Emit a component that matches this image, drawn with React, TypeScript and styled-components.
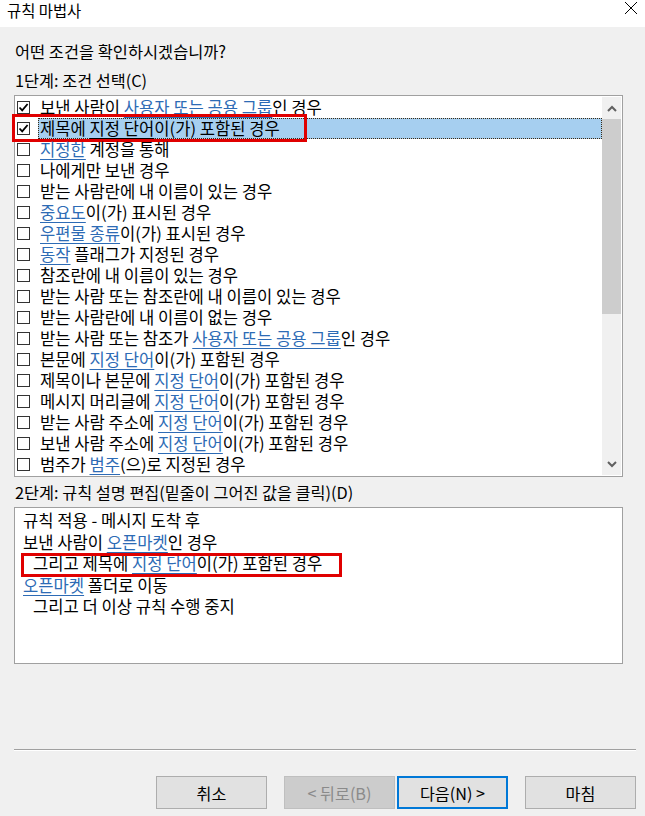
import React from "react";
import styled, { createGlobalStyle } from "styled-components";

const GlobalStyle = createGlobalStyle`
  html, body { margin: 0; padding: 0; background: #f0f0f0; }
  body {
    font-family: "Noto Sans CJK KR", "Noto Sans", "Liberation Sans", sans-serif;
    font-size: 16.3px;
    color: #000;
  }
  * { box-sizing: border-box; }
`;

const Window = styled.div`
  width: 645px;
  height: 816px;
  display: flex;
  flex-direction: column;
  background: #f0f0f0;
  overflow: hidden;
`;

const TitleBar = styled.div`
  height: 27px;
  background: #fff;
  display: flex;
  align-items: flex-start;
  justify-content: space-between;
  padding: 0 7px 0 7px;
`;

const TitleText = styled.div`
  font-size: 15.4px;
  line-height: 20px;
`;

const CloseBtn = styled.div`
  width: 14px;
  height: 14px;
  margin-top: 1px;
  display: flex;
`;

const Body = styled.div`
  flex: 1;
  display: flex;
  flex-direction: column;
  padding: 14px 9px 7px 14px;
`;

const Label = styled.div<{ $mt?: number; $size?: number }>`
  line-height: 21px;
  height: 21px;
  padding-left: 1px;
  white-space: nowrap;
  font-size: ${(p) => p.$size ?? 16.3}px;
  margin-top: ${(p) => p.$mt ?? 0}px;
`;

const ListBox = styled.div`
  margin-top: 4px;
  width: 609px;
  height: 382px;
  background: #fff;
  border: 1px solid #a0a0a0;
  display: flex;
  padding: 0 1px 0 0;
`;

const Rows = styled.div`
  flex: 1;
  display: flex;
  flex-direction: column;
  padding-top: 1px;
  font-size: 16.6px;
`;

const Row = styled.div`
  position: relative;
  height: 21px;
  display: flex;
  align-items: center;
  padding-left: 2px;
  white-space: nowrap;
`;

const Check = styled.div`
  width: 13px;
  height: 13px;
  border: 1px solid #333;
  background: #fff;
  flex: none;
  display: flex;
  align-items: center;
  justify-content: center;
  margin-right: 8px;
`;

const RowText = styled.div<{ $selected?: boolean }>`
  flex: 1;
  height: 21px;
  line-height: 19px;
  padding: 0 1px;
  border: 1px dotted ${(p) => (p.$selected ? "#3b2a12" : "transparent")};
  background: ${(p) => (p.$selected ? "#a6cff0" : "transparent")};
`;

const Link = styled.span<{ $plain?: boolean }>`
  color: ${(p) => (p.$plain ? "#000" : "#2d6bb5")};
  text-decoration: underline;
  text-decoration-thickness: 1px;
  text-underline-offset: 3px;
`;

const Annotation = styled.div<{ $l: number; $t: number; $w: number; $h: number }>`
  position: absolute;
  left: ${(p) => p.$l}px;
  top: ${(p) => p.$t}px;
  width: ${(p) => p.$w}px;
  height: ${(p) => p.$h}px;
  border: 3px solid #e00000;
  pointer-events: none;
`;

const ScrollBar = styled.div`
  width: 19px;
  flex: none;
  background: #f0f0f0;
  display: flex;
  flex-direction: column;
  margin-top: 1px;
  margin-bottom: 1px;
`;

const ScrollArrow = styled.div`
  height: 22px;
  display: flex;
  align-items: center;
  justify-content: center;
  flex: none;
`;

const Thumb = styled.div`
  height: 195px;
  background: #cdcdcd;
  flex: none;
`;

const Track = styled.div`
  flex: 1;
`;

const DescBox = styled.div`
  margin-top: 4px;
  width: 609px;
  height: 157px;
  background: #fff;
  border: 1px solid #a0a0a0;
  padding-top: 2px;
  font-size: 16.6px;
`;

const DescLine = styled.div<{ $indent?: boolean }>`
  position: relative;
  height: 21.6px;
  line-height: 21.6px;
  padding-left: ${(p) => (p.$indent ? 18 : 8)}px;
  white-space: nowrap;
`;

const Separator = styled.div`
  margin-top: 85px;
  height: 2px;
  border-top: 1px solid #a0a0a0;
  border-bottom: 1px solid #ffffff;
`;

const ButtonRow = styled.div`
  margin-top: 25px;
  display: flex;
  padding-left: 142px;
`;

const Button = styled.div<{ $variant?: "default" | "disabled"; $ml?: number }>`
  width: 111px;
  height: 33px;
  margin-left: ${(p) => p.$ml ?? 0}px;
  display: flex;
  align-items: center;
  justify-content: center;
  font-size: 16.2px;
  background: ${(p) => (p.$variant === "disabled" ? "#cccccc" : "#e1e1e1")};
  color: ${(p) => (p.$variant === "disabled" ? "#8a8a8a" : "#000")};
  border: ${(p) =>
    p.$variant === "default"
      ? "2px solid #0078d7"
      : p.$variant === "disabled"
      ? "1px solid #bfbfbf"
      : "1px solid #adadad"};
`;

type Seg = string | { link: string };
type Item = { segs: Seg[]; checked?: boolean; selected?: boolean };

const L = (t: string) => ({ link: t });

const items: Item[] = [
  { checked: true, segs: ["보낸 사람이 ", L("사용자 또는 공용 그룹"), "인 경우"] },
  { checked: true, selected: true, segs: ["제목에 ", L("지정 단어"), "이(가) 포함된 경우"] },
  { segs: [L("지정한"), " 계정을 통해"] },
  { segs: ["나에게만 보낸 경우"] },
  { segs: ["받는 사람란에 내 이름이 있는 경우"] },
  { segs: [L("중요도"), "이(가) 표시된 경우"] },
  { segs: [L("우편물 종류"), "이(가) 표시된 경우"] },
  { segs: [L("동작"), " 플래그가 지정된 경우"] },
  { segs: ["참조란에 내 이름이 있는 경우"] },
  { segs: ["받는 사람 또는 참조란에 내 이름이 있는 경우"] },
  { segs: ["받는 사람란에 내 이름이 없는 경우"] },
  { segs: ["받는 사람 또는 참조가 ", L("사용자 또는 공용 그룹"), "인 경우"] },
  { segs: ["본문에 ", L("지정 단어"), "이(가) 포함된 경우"] },
  { segs: ["제목이나 본문에 ", L("지정 단어"), "이(가) 포함된 경우"] },
  { segs: ["메시지 머리글에 ", L("지정 단어"), "이(가) 포함된 경우"] },
  { segs: ["받는 사람 주소에 ", L("지정 단어"), "이(가) 포함된 경우"] },
  { segs: ["보낸 사람 주소에 ", L("지정 단어"), "이(가) 포함된 경우"] },
  { segs: ["범주가 ", L("범주"), "(으)로 지정된 경우"] },
];

const renderSegs = (segs: Seg[], plain?: boolean) =>
  segs.map((s, i) =>
    typeof s === "string" ? (
      <React.Fragment key={i}>{s}</React.Fragment>
    ) : (
      <Link key={i} $plain={plain}>
        {s.link}
      </Link>
    )
  );

const CheckMark = () => (
  <svg width="11" height="11" viewBox="0 0 11 11">
    <polyline points="1.5,5.5 4.2,8.3 9.6,2" fill="none" stroke="#000" strokeWidth="1.8" />
  </svg>
);

const Chevron = ({ up }: { up?: boolean }) => (
  <svg width="10" height="7" viewBox="0 0 10 7">
    <polyline
      points={up ? "1,6 5,2 9,6" : "1,1 5,5 9,1"}
      fill="none"
      stroke="#606060"
      strokeWidth="2"
    />
  </svg>
);

export default function App() {
  return (
    <>
      <GlobalStyle />
      <Window>
        <TitleBar>
          <TitleText>규칙 마법사</TitleText>
          <CloseBtn>
            <svg width="14" height="14" viewBox="0 0 14 14">
              <path d="M1 1 L13 13 M13 1 L1 13" stroke="#000" strokeWidth="1" fill="none" />
            </svg>
          </CloseBtn>
        </TitleBar>
        <Body>
          <Label $size={16.4}>어떤 조건을 확인하시겠습니까?</Label>
          <Label $mt={8}>1단계: 조건 선택(C)</Label>
          <ListBox>
            <Rows>
              {items.map((it, i) => (
                <Row key={i}>
                  <Check>{it.checked && <CheckMark />}</Check>
                  <RowText $selected={it.selected}>{renderSegs(it.segs, it.selected)}</RowText>
                  {it.selected && <Annotation $l={-3} $t={-4} $w={295} $h={28} />}
                </Row>
              ))}
            </Rows>
            <ScrollBar>
              <ScrollArrow>
                <Chevron up />
              </ScrollArrow>
              <Thumb />
              <Track />
              <ScrollArrow>
                <Chevron />
              </ScrollArrow>
            </ScrollBar>
          </ListBox>
          <Label $mt={5}>2단계: 규칙 설명 편집(밑줄이 그어진 값을 클릭)(D)</Label>
          <DescBox>
            <DescLine>규칙 적용 - 메시지 도착 후</DescLine>
            <DescLine>
              보낸 사람이 <Link>오픈마켓</Link>인 경우
            </DescLine>
            <DescLine $indent>
              그리고 제목에 <Link>지정 단어</Link>이(가) 포함된 경우
              <Annotation $l={6} $t={0} $w={321} $h={24} />
            </DescLine>
            <DescLine>
              <Link>오픈마켓</Link> 폴더로 이동
            </DescLine>
            <DescLine $indent>그리고 더 이상 규칙 수행 중지</DescLine>
          </DescBox>
          <Separator />
          <ButtonRow>
            <Button>취소</Button>
            <Button $variant="disabled" $ml={17}>
              &lt; 뒤로(B)
            </Button>
            <Button $variant="default" $ml={2}>
              다음(N) &gt;
            </Button>
            <Button $ml={17}>마침</Button>
          </ButtonRow>
        </Body>
      </Window>
    </>
  );
}
